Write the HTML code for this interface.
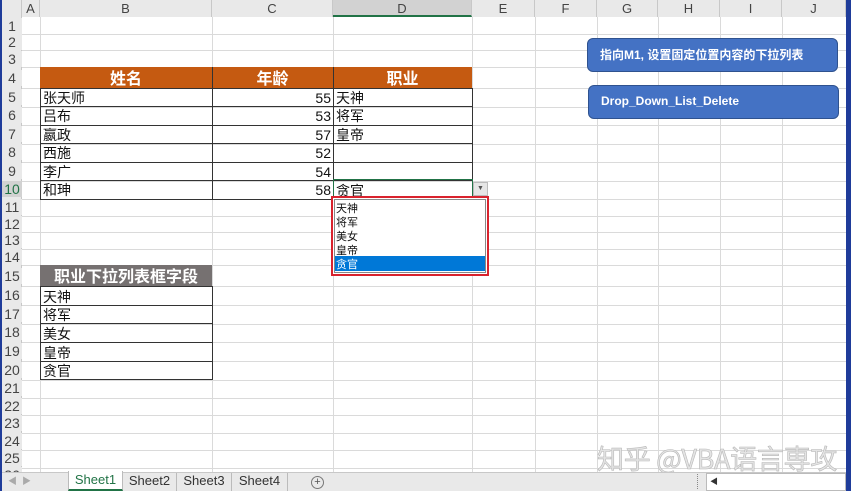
<!DOCTYPE html>
<html><head><meta charset="utf-8"><style>
*{margin:0;padding:0;box-sizing:border-box}
body{width:851px;height:491px;overflow:hidden;background:#fff;position:relative;font-family:"Liberation Sans","Noto Sans CJK SC",sans-serif;}
.a{position:absolute}
.hl{position:absolute;left:22px;width:824px;height:1px;background:#dadada}
.vl{position:absolute;top:17px;width:1px;height:455px;background:#dadada}
.rh{position:absolute;left:2px;width:20px;font-size:14px;color:#444;text-align:center;background:#e9e9e9}
.ch{position:absolute;top:0;height:17px;font-size:13px;color:#444;text-align:center;line-height:17px;background:#e9e9e9;border-right:1px solid #c8c8c8}
.c{position:absolute;font-size:14px;color:#111;white-space:nowrap;font-family:"Noto Sans CJK SC",sans-serif;padding-top:1px}
.n{font-family:"Liberation Sans",sans-serif;font-size:14px;text-align:right}
.bx{position:absolute;border:1px solid #333}
.btn{position:absolute;background:#4472c4;border:1px solid #2f528f;border-radius:6px;color:#fff;font-weight:bold;font-size:12px;padding-left:12px;font-family:"Liberation Sans","Noto Sans CJK SC",sans-serif}
</style></head><body>
<div class="a" style="left:0;top:0;width:2px;height:491px;background:#1f3c9a"></div>
<div class="a" style="left:846px;top:0;width:5px;height:491px;background:#1f3c9a"></div>
<div class="a" style="left:0;top:0;width:851px;height:1px;background:#1f3c9a"></div>
<div class="ch" style="left:2px;width:20px"></div>
<div class="ch" style="left:22px;width:18px">A</div>
<div class="ch" style="left:40px;width:172px">B</div>
<div class="ch" style="left:212px;width:121px">C</div>
<div class="ch" style="left:333px;width:139px;background:#d2d2d2;border-bottom:2px solid #217346">D</div>
<div class="ch" style="left:472px;width:63px">E</div>
<div class="ch" style="left:535px;width:62px">F</div>
<div class="ch" style="left:597px;width:61px">G</div>
<div class="ch" style="left:658px;width:62px">H</div>
<div class="ch" style="left:720px;width:62px">I</div>
<div class="ch" style="left:782px;width:64px">J</div>
<div class="a" style="left:2px;top:17px;width:20px;height:455px;background:#e9e9e9;border-right:1px solid #c8c8c8"></div>
<div class="vl" style="left:40px"></div><div class="vl" style="left:212px"></div><div class="vl" style="left:333px"></div><div class="vl" style="left:472px"></div><div class="vl" style="left:535px"></div><div class="vl" style="left:597px"></div><div class="vl" style="left:658px"></div><div class="vl" style="left:720px"></div><div class="vl" style="left:782px"></div>
<div class="hl" style="top:33.7px"></div><div class="hl" style="top:50.3px"></div><div class="hl" style="top:67px"></div><div class="hl" style="top:88px"></div><div class="hl" style="top:106.5px"></div><div class="hl" style="top:125px"></div><div class="hl" style="top:143.5px"></div><div class="hl" style="top:162px"></div><div class="hl" style="top:180.5px"></div><div class="hl" style="top:199px"></div><div class="hl" style="top:215.5px"></div><div class="hl" style="top:232px"></div><div class="hl" style="top:248.5px"></div><div class="hl" style="top:265px"></div><div class="hl" style="top:286px"></div><div class="hl" style="top:304.8px"></div><div class="hl" style="top:323.6px"></div><div class="hl" style="top:342.4px"></div><div class="hl" style="top:361.2px"></div><div class="hl" style="top:380px"></div><div class="hl" style="top:397.5px"></div><div class="hl" style="top:415px"></div><div class="hl" style="top:432.5px"></div><div class="hl" style="top:450px"></div><div class="hl" style="top:467.5px"></div>
<div class="rh" style="top:18px">1</div><div class="rh" style="top:34px">2</div><div class="rh" style="top:51px">3</div><div class="rh" style="top:70px">4</div><div class="rh" style="top:89px">5</div><div class="rh" style="top:107px">6</div><div class="rh" style="top:126px">7</div><div class="rh" style="top:144px">8</div><div class="rh" style="top:163px">9</div><div class="rh" style="top:181px;background:#d2d2d2;color:#217346">10</div><div class="rh" style="top:199px">11</div><div class="rh" style="top:216px">12</div><div class="rh" style="top:232px">13</div><div class="rh" style="top:249px">14</div><div class="rh" style="top:268px">15</div><div class="rh" style="top:287px">16</div><div class="rh" style="top:306px">17</div><div class="rh" style="top:324px">18</div><div class="rh" style="top:343px">19</div><div class="rh" style="top:362px">20</div><div class="rh" style="top:380px">21</div><div class="rh" style="top:398px">22</div><div class="rh" style="top:415px">23</div><div class="rh" style="top:433px">24</div><div class="rh" style="top:450px">25</div><div class="rh" style="top:467px;height:5px;overflow:hidden">26</div>
<div class="a" style="left:40px;top:67px;width:432px;height:21px;background:#c55a11"></div>
<div class="c" style="left:40px;top:66px;width:172px;text-align:center;color:#fff;font-size:16px;line-height:21px;font-weight:bold">姓名</div>
<div class="c" style="left:212px;top:66px;width:121px;text-align:center;color:#fff;font-size:16px;line-height:21px;font-weight:bold">年龄</div>
<div class="c" style="left:333px;top:66px;width:139px;text-align:center;color:#fff;font-size:16px;line-height:21px;font-weight:bold">职业</div>
<div class="a" style="left:212px;top:67px;width:1px;height:21px;background:#333"></div><div class="a" style="left:333px;top:67px;width:1px;height:21px;background:#333"></div>
<div class="bx" style="left:40px;top:88px;width:173px;height:19px"></div><div class="bx" style="left:212px;top:88px;width:122px;height:19px"></div><div class="bx" style="left:333px;top:88px;width:140px;height:19px"></div>
<div class="bx" style="left:40px;top:106px;width:173px;height:20px"></div><div class="bx" style="left:212px;top:106px;width:122px;height:20px"></div><div class="bx" style="left:333px;top:106px;width:140px;height:20px"></div>
<div class="bx" style="left:40px;top:125px;width:173px;height:19px"></div><div class="bx" style="left:212px;top:125px;width:122px;height:19px"></div><div class="bx" style="left:333px;top:125px;width:140px;height:19px"></div>
<div class="bx" style="left:40px;top:143px;width:173px;height:20px"></div><div class="bx" style="left:212px;top:143px;width:122px;height:20px"></div><div class="bx" style="left:333px;top:143px;width:140px;height:20px"></div>
<div class="bx" style="left:40px;top:162px;width:173px;height:19px"></div><div class="bx" style="left:212px;top:162px;width:122px;height:19px"></div><div class="bx" style="left:333px;top:162px;width:140px;height:19px"></div>
<div class="bx" style="left:40px;top:180px;width:173px;height:20px"></div><div class="bx" style="left:212px;top:180px;width:122px;height:20px"></div>
<div class="a" style="left:333px;top:179px;width:140px;height:21px;border:1.5px solid #217346"></div>
<div class="c" style="left:43px;top:88px;line-height:19px">张天师</div><div class="c n" style="left:212px;width:119px;top:88px;line-height:19px">55</div><div class="c" style="left:336px;top:88px;line-height:19px">天神</div>
<div class="c" style="left:43px;top:106px;line-height:19px">吕布</div><div class="c n" style="left:212px;width:119px;top:106px;line-height:19px">53</div><div class="c" style="left:336px;top:106px;line-height:19px">将军</div>
<div class="c" style="left:43px;top:125px;line-height:19px">嬴政</div><div class="c n" style="left:212px;width:119px;top:125px;line-height:19px">57</div><div class="c" style="left:336px;top:125px;line-height:19px">皇帝</div>
<div class="c" style="left:43px;top:143px;line-height:19px">西施</div><div class="c n" style="left:212px;width:119px;top:143px;line-height:19px">52</div>
<div class="c" style="left:43px;top:162px;line-height:19px">李广</div><div class="c n" style="left:212px;width:119px;top:162px;line-height:19px">54</div>
<div class="c" style="left:43px;top:180px;line-height:19px">和珅</div><div class="c n" style="left:212px;width:119px;top:180px;line-height:19px">58</div><div class="c" style="left:336px;top:181px;line-height:19px">贪官</div>
<div class="a" style="left:473px;top:182px;width:15px;height:14px;background:#e6e6e6;border:1px solid #bbb;font-size:7px;text-align:center;line-height:12px;color:#555">▼</div>
<div class="a" style="left:331px;top:196px;width:158px;height:80px;border:2px solid #d9232e;background:#fff"></div>
<div class="a" style="left:334px;top:199px;width:152px;height:74px;border:1px solid #888"></div>
<div class="c" style="left:336px;top:200px;font-size:11px;line-height:14px">天神</div>
<div class="c" style="left:336px;top:214px;font-size:11px;line-height:14px">将军</div>
<div class="c" style="left:336px;top:228px;font-size:11px;line-height:14px">美女</div>
<div class="c" style="left:336px;top:242px;font-size:11px;line-height:14px">皇帝</div>
<div class="a" style="left:335px;top:256px;width:150px;height:15px;background:#0078d7"></div>
<div class="c" style="left:336px;top:256px;font-size:11px;line-height:15px;color:#fff">贪官</div>
<div class="a" style="left:40px;top:265px;width:172px;height:21px;background:#767171"></div>
<div class="c" style="left:40px;top:264px;width:172px;text-align:center;color:#fff;font-size:16px;line-height:21px;font-weight:bold">职业下拉列表框字段</div>
<div class="bx" style="left:40px;top:286px;width:173px;height:20px"></div>
<div class="bx" style="left:40px;top:305px;width:173px;height:19px"></div>
<div class="bx" style="left:40px;top:323px;width:173px;height:20px"></div>
<div class="bx" style="left:40px;top:342px;width:173px;height:20px"></div>
<div class="bx" style="left:40px;top:361px;width:173px;height:19px"></div>
<div class="c" style="left:43px;top:287px;line-height:18px">天神</div>
<div class="c" style="left:43px;top:305px;line-height:18px">将军</div>
<div class="c" style="left:43px;top:324px;line-height:18px">美女</div>
<div class="c" style="left:43px;top:343px;line-height:18px">皇帝</div>
<div class="c" style="left:43px;top:361px;line-height:18px">贪官</div>
<div class="btn" style="left:587px;top:38px;width:251px;height:34px;line-height:32px">指向M1, 设置固定位置内容的下拉列表</div>
<div class="btn" style="left:588px;top:85px;width:251px;height:34px;line-height:30px">Drop_Down_List_Delete</div>
<div class="a" style="left:597px;top:438px;font-size:27px;color:#e4e4e4;font-family:'Noto Sans CJK SC',sans-serif;-webkit-text-stroke:0.6px #b8b8b8;white-space:nowrap;letter-spacing:-0.3px">知乎 @VBA语言専攻</div>
<div class="a" style="left:2px;top:472px;width:844px;height:19px;background:#e9e9e9;border-top:1px solid #c8c8c8"></div>
<div class="a" style="left:8px;top:474px;font-size:9px;color:#aaa">◀ &nbsp;▶</div>
<div class="a" style="left:68px;top:471px;width:55px;height:20px;background:#fff;color:#217346;font-size:13px;text-align:center;line-height:18px;border-bottom:2px solid #217346;border-left:1px solid #bbb;border-right:1px solid #bbb">Sheet1</div>
<div class="a" style="left:123px;top:473px;width:54px;height:18px;font-size:13px;color:#333;text-align:center;line-height:16px;border-right:1px solid #bbb">Sheet2</div>
<div class="a" style="left:177px;top:473px;width:55px;height:18px;font-size:13px;color:#333;text-align:center;line-height:16px;border-right:1px solid #bbb">Sheet3</div>
<div class="a" style="left:232px;top:473px;width:56px;height:18px;font-size:13px;color:#333;text-align:center;line-height:16px;border-right:1px solid #bbb">Sheet4</div>
<div class="a" style="left:311px;top:476px;width:13px;height:13px;border:1px solid #777;border-radius:50%;font-size:11px;line-height:11px;text-align:center;color:#555">+</div>
<div class="a" style="left:697px;top:474px;width:1px;height:15px;border-left:1px dotted #888"></div>
<div class="a" style="left:706px;top:473px;width:140px;height:18px;background:#fff;border:1px solid #bbb"></div>
<div class="a" style="left:710px;top:476px;font-size:8px;color:#333">◀</div>
</body></html>
